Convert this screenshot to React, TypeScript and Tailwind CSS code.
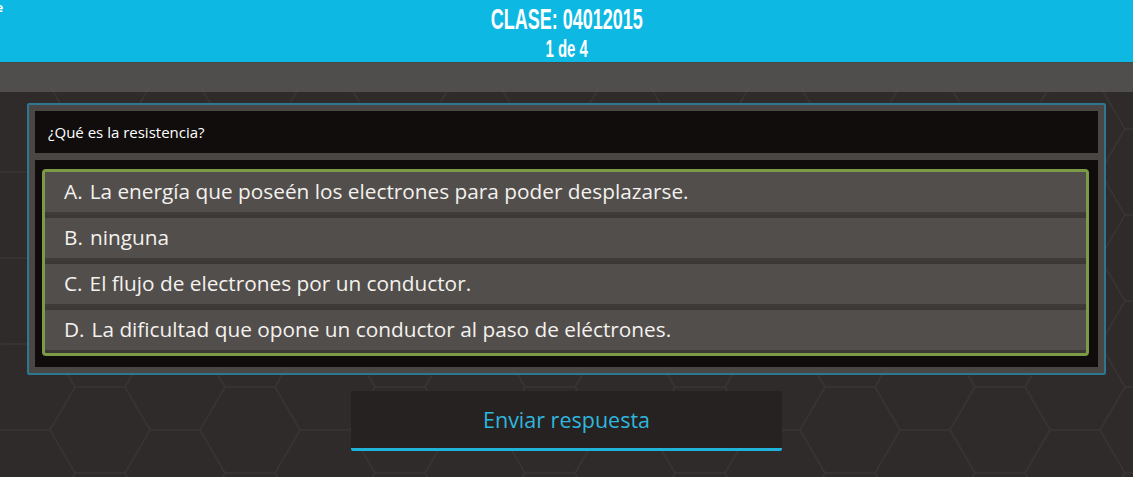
import React from "react";

const options = [
  { l: "A.", t: "La energía que poseén los electrones para poder desplazarse." },
  { l: "B.", t: "ninguna" },
  { l: "C.", t: "El flujo de electrones por un conductor." },
  { l: "D.", t: "La dificultad que opone un conductor al paso de eléctrones." },
];

function HexBg() {
  return (
    <svg className="absolute inset-0 w-full h-full pointer-events-none" aria-hidden="true">
      <defs>
        <pattern id="hex" width="150" height="86" patternUnits="userSpaceOnUse" x="-25" y="0">
          <path
            d="M0 43 L25 0 L75 0 L100 43 L75 86 L25 86 Z M100 43 L150 43"
            fill="none"
            stroke="#ffffff"
            strokeOpacity="0.045"
            strokeWidth="1.5"
          />
        </pattern>
      </defs>
      <rect width="100%" height="100%" fill="url(#hex)" />
    </svg>
  );
}

export default function App() {
  return (
    <div className="w-[1133px] h-[477px] overflow-hidden bg-[#2f2b2a] relative" style={{ fontFamily: '"Open Sans", "Liberation Sans", sans-serif' }}>
      <HexBg />
      <span className="absolute left-[-4px] top-[2px] text-white text-[12px] font-bold leading-none z-10">e</span>
      <header className="relative h-[62px] bg-[#0db8e2] flex flex-col items-center pt-[4px]">
        <div
          className="text-white font-bold text-[30px] leading-[30px] scale-x-[0.6] whitespace-nowrap"
          style={{ fontFamily: '"Liberation Sans", Arial, sans-serif' }}
        >
          CLASE: 04012015
        </div>
        <div
          className="text-white font-bold text-[23px] leading-[23px] mt-[4px] scale-x-[0.65] whitespace-nowrap"
          style={{ fontFamily: '"Liberation Sans", Arial, sans-serif' }}
        >
          1 de 4
        </div>
      </header>
      <div className="relative h-[30px] bg-[#545251]/90 border-t border-[#4a4847]" />
      <main className="relative px-[27px] pt-[11px]">
        <div className="border-2 border-[#2c7792] bg-[#4a4644] p-[6px] rounded-[2px]">
          <div className="h-[42px] bg-[#110d0c] flex items-center pl-[13px] text-white text-[15px]">
            ¿Qué es la resistencia?
          </div>
          <div className="mt-[7px] bg-[#100c0b] pt-[9px] pb-[11px] pl-[7px] pr-[9px]">
            <div className="border-[3px] border-[#7b9b47] rounded-[4px] bg-[#3c3836]">
              {options.map((o, i) => (
                <div
                  key={o.l}
                  className={`h-[40px] bg-[#524e4c] flex items-center pl-[19px] text-[20.8px] text-[#f4f2ee] ${
                    i < 3 ? "mb-[6px] shadow-[0_3px_0_#3f3b39]" : "mb-[3px]"
                  }`}
                >
                  <span className="mr-[7px]">{o.l}</span>
                  <span>{o.t}</span>
                </div>
              ))}
            </div>
          </div>
        </div>
        <div className="flex justify-center mt-[16px]">
          <button className="w-[431px] h-[60px] bg-[#262221] border-b-[3px] border-[#1fb3dc] rounded-b-[2px] text-[#2fb6dd] text-[21.5px] pt-[1px]">
            Enviar respuesta
          </button>
        </div>
      </main>
    </div>
  );
}
